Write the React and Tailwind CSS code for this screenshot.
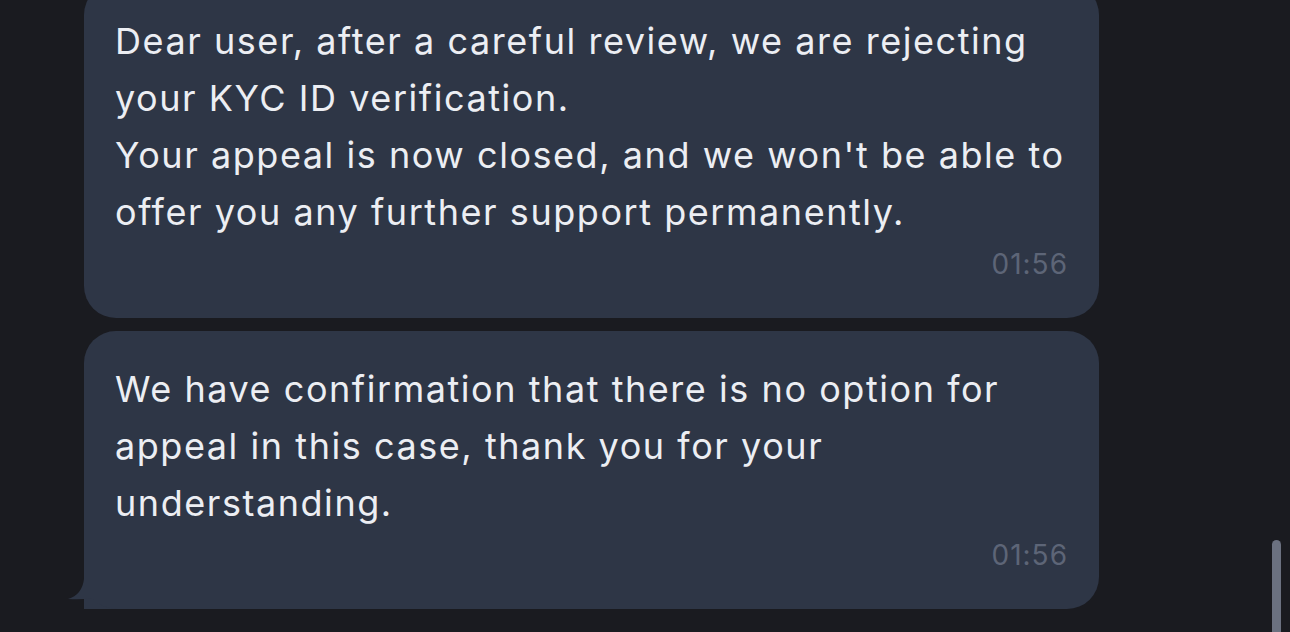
export default function App() {
  const font = { fontFamily: "Inter, 'Noto Sans', sans-serif" }
  const messages = [
    {
      lines: [
        "Dear user, after a careful review, we are rejecting",
        "your KYC ID verification.",
        "Your appeal is now closed, and we won't be able to",
        "offer you any further support permanently.",
      ],
      time: "01:56",
    },
    {
      lines: [
        "We have confirmation that there is no option for",
        "appeal in this case, thank you for your",
        "understanding.",
      ],
      time: "01:56",
      tail: true,
    },
  ]

  return (
    <div className="h-[632px] w-[1290px] overflow-hidden bg-[#1a1b20] relative" style={font}>
      <div className="flex flex-col gap-[13px] pl-[84px] -mt-[17px]">
        {messages.map((m, i) => (
          <div
            key={i}
            className={
              "relative w-[1015px] bg-[#2e3646] rounded-[32px] pl-[31px] pr-[31px] pt-[30px] pb-[38px] " +
              (m.tail ? "rounded-bl-none" : "")
            }
          >
            {m.lines.map((l, j) => (
              <p key={j} className="text-[36px] leading-[57px] tracking-[1.55px] text-[#eceef3] whitespace-nowrap">
                {l}
              </p>
            ))}
            <div className="text-right text-[28px] leading-[32px] tracking-[1px] text-[#5d6577] mt-[7px]">{m.time}</div>
            {m.tail && (
              <svg className="absolute left-[-16px] bottom-0" width="50" height="40" viewBox="0 0 50 40">
                <path d="M16 0 L16 10 Q14 26 0 30 Q14 31 24 29 Q34 40 50 40 L50 0 Z" fill="#2e3646" />
              </svg>
            )}
          </div>
        ))}
      </div>
      <div className="absolute right-[9px] top-[540px] w-[9px] h-[100px] rounded-full bg-[#6b7180]" />
    </div>
  )
}
